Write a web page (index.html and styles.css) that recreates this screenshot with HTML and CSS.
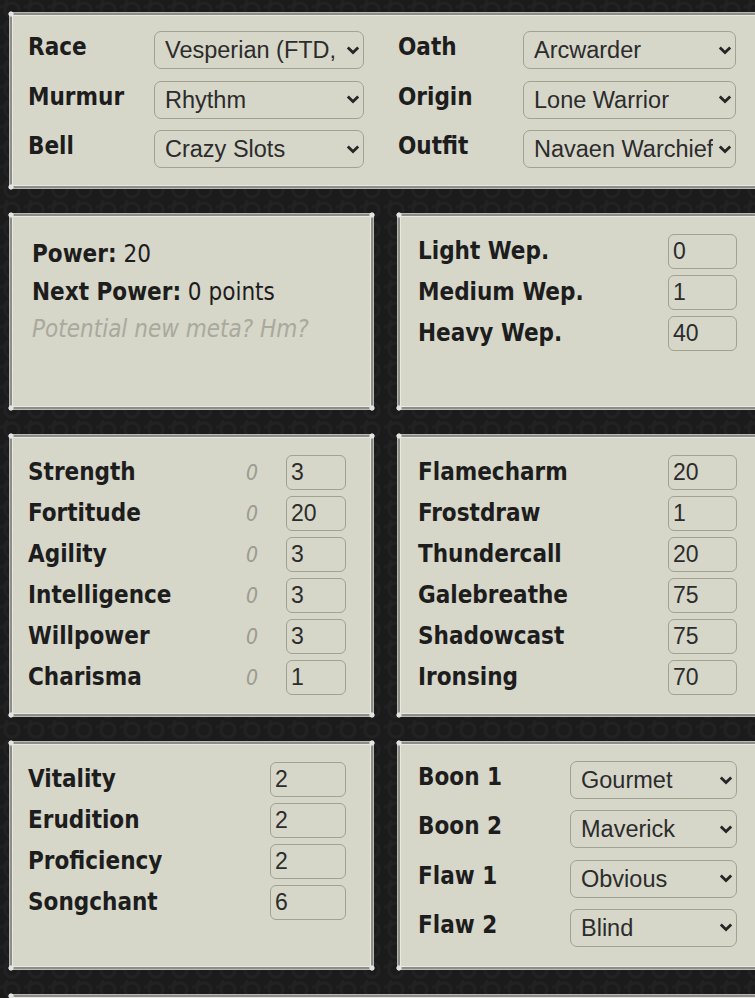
FILE: index.html
```html
<!DOCTYPE html>
<html lang="en">
<head>
<meta charset="utf-8">
<title>Character Sheet</title>
<link rel="stylesheet" href="styles.css">
</head>
<body>
<main class="sheet">
  <section class="panel panel-wide identity">
    <div class="pair-grid pair-left">
      <span class="lbl">Race</span>
      <span class="sel-wrap"><select class="sel"><option>Vesperian (FTD, Rare)</option></select><svg class="chev" viewBox="0 0 14 9" width="14" height="9"><path d="M1.8 1.6 L7 6.6 L12.2 1.6"/></svg></span>
      <span class="lbl">Murmur</span>
      <span class="sel-wrap"><select class="sel"><option>Rhythm</option></select><svg class="chev" viewBox="0 0 14 9" width="14" height="9"><path d="M1.8 1.6 L7 6.6 L12.2 1.6"/></svg></span>
      <span class="lbl">Bell</span>
      <span class="sel-wrap"><select class="sel"><option>Crazy Slots</option></select><svg class="chev" viewBox="0 0 14 9" width="14" height="9"><path d="M1.8 1.6 L7 6.6 L12.2 1.6"/></svg></span>
    </div>
    <div class="pair-grid pair-right">
      <span class="lbl">Oath</span>
      <span class="sel-wrap"><select class="sel"><option>Arcwarder</option></select><svg class="chev" viewBox="0 0 14 9" width="14" height="9"><path d="M1.8 1.6 L7 6.6 L12.2 1.6"/></svg></span>
      <span class="lbl">Origin</span>
      <span class="sel-wrap"><select class="sel"><option>Lone Warrior</option></select><svg class="chev" viewBox="0 0 14 9" width="14" height="9"><path d="M1.8 1.6 L7 6.6 L12.2 1.6"/></svg></span>
      <span class="lbl">Outfit</span>
      <span class="sel-wrap"><select class="sel"><option>Navaen Warchief</option></select><svg class="chev" viewBox="0 0 14 9" width="14" height="9"><path d="M1.8 1.6 L7 6.6 L12.2 1.6"/></svg></span>
    </div>
  </section>

  <section class="panel power">
    <p class="line"><b>Power:</b> 20</p>
    <p class="line"><b>Next Power:</b> 0 points</p>
    <p class="line hint">Potential new meta? Hm?</p>
  </section>

  <section class="panel right-panel">
    <div class="field-grid num-grid w69">
      <span class="lbl">Light Wep.</span><input class="num" value="0">
      <span class="lbl">Medium Wep.</span><input class="num" value="1">
      <span class="lbl">Heavy Wep.</span><input class="num" value="40">
    </div>
  </section>

  <section class="panel left-panel">
    <div class="field-grid stat-grid">
      <span class="lbl">Strength</span><span class="mod">0</span><input class="num" value="3">
      <span class="lbl">Fortitude</span><span class="mod">0</span><input class="num" value="20">
      <span class="lbl">Agility</span><span class="mod">0</span><input class="num" value="3">
      <span class="lbl">Intelligence</span><span class="mod">0</span><input class="num" value="3">
      <span class="lbl">Willpower</span><span class="mod">0</span><input class="num" value="3">
      <span class="lbl">Charisma</span><span class="mod">0</span><input class="num" value="1">
    </div>
  </section>

  <section class="panel right-panel">
    <div class="field-grid num-grid w69">
      <span class="lbl">Flamecharm</span><input class="num" value="20">
      <span class="lbl">Frostdraw</span><input class="num" value="1">
      <span class="lbl">Thundercall</span><input class="num" value="20">
      <span class="lbl">Galebreathe</span><input class="num" value="75">
      <span class="lbl">Shadowcast</span><input class="num" value="75">
      <span class="lbl">Ironsing</span><input class="num" value="70">
    </div>
  </section>

  <section class="panel left-panel">
    <div class="field-grid num-grid w76">
      <span class="lbl">Vitality</span><input class="num" value="2">
      <span class="lbl">Erudition</span><input class="num" value="2">
      <span class="lbl">Proficiency</span><input class="num" value="2">
      <span class="lbl">Songchant</span><input class="num" value="6">
    </div>
  </section>

  <section class="panel right-panel boons">
    <div class="field-grid sel-grid">
      <span class="lbl">Boon 1</span>
      <span class="sel-wrap"><select class="sel"><option>Gourmet</option></select><svg class="chev" viewBox="0 0 14 9" width="14" height="9"><path d="M1.8 1.6 L7 6.6 L12.2 1.6"/></svg></span>
      <span class="lbl">Boon 2</span>
      <span class="sel-wrap"><select class="sel"><option>Maverick</option></select><svg class="chev" viewBox="0 0 14 9" width="14" height="9"><path d="M1.8 1.6 L7 6.6 L12.2 1.6"/></svg></span>
      <span class="lbl">Flaw 1</span>
      <span class="sel-wrap"><select class="sel"><option>Obvious</option></select><svg class="chev" viewBox="0 0 14 9" width="14" height="9"><path d="M1.8 1.6 L7 6.6 L12.2 1.6"/></svg></span>
      <span class="lbl">Flaw 2</span>
      <span class="sel-wrap"><select class="sel"><option>Blind</option></select><svg class="chev" viewBox="0 0 14 9" width="14" height="9"><path d="M1.8 1.6 L7 6.6 L12.2 1.6"/></svg></span>
    </div>
  </section>

  <section class="panel panel-wide tail"></section>
</main>
</body>
</html>
```

FILE: styles.css
```css
html, body {
  margin: 0;
  padding: 0;
  overflow: hidden;
}

body {
  background-color: #1b1b1b;
  background-image:
    radial-gradient(circle at 50% 50%, transparent 0 5px, #222 6px 8px, transparent 9px),
    radial-gradient(circle at 0 0, transparent 0 5px, #212121 6px 8px, transparent 9px);
  background-size: 24px 20px, 24px 20px;
  font-family: "DejaVu Sans Condensed", "DejaVu Sans", sans-serif;
  font-stretch: condensed;
  font-size: 24px;
  color: #1d1d1d;
}

.sheet {
  display: grid;
  grid-template-columns: 365px 365px;
  grid-template-rows: 177px 197px 283px 229px 4px;
  column-gap: 23px;
  row-gap: 24px;
  padding: 12px 0 0 9px;
  width: 753px;
  height: 986px;
}

.panel {
  position: relative;
  box-sizing: border-box;
  background: #d6d6c9;
  border: 2px solid #8c8c88;
  box-shadow: inset 0 0 0 1px #e9e9e1, 0 0 0 1px #b9b9b4;
  margin: 1px;
}

.panel::before {
  content: "";
  position: absolute;
  inset: -5px;
  pointer-events: none;
  background:
    radial-gradient(circle at 4px 4px, #e4e4e4 0 2.2px, transparent 3px) left top / 9px 9px no-repeat,
    radial-gradient(circle at 5px 4px, #e4e4e4 0 2.2px, transparent 3px) right top / 9px 9px no-repeat,
    radial-gradient(circle at 4px 5px, #e4e4e4 0 2.2px, transparent 3px) left bottom / 9px 9px no-repeat,
    radial-gradient(circle at 5px 5px, #e4e4e4 0 2.2px, transparent 3px) right bottom / 9px 9px no-repeat;
}

.panel-wide {
  grid-column: 1 / span 2;
}

.tail {
  margin-bottom: 0;
  border-bottom: 0;
}

.lbl {
  font-weight: bold;
  line-height: normal;
  white-space: nowrap;
}

/* identity panel */
.identity {
  display: flex;
  align-items: flex-start;
  gap: 34px;
  padding: 16px 22px 0 16px;
}

.pair-grid {
  display: grid;
  row-gap: 11.5px;
  align-items: start;
  align-content: start;
}

.pair-left {
  grid-template-columns: 126px 210px;
}

.pair-right {
  grid-template-columns: 125px 213px;
}

.pair-grid .lbl,
.sel-grid .lbl {
  margin-top: 2px;
}

/* selects */
.sel-wrap {
  position: relative;
  display: block;
  height: 38px;
}

.sel {
  appearance: none;
  -webkit-appearance: none;
  box-sizing: border-box;
  display: block;
  width: 100%;
  height: 38px;
  margin: 0;
  padding: 0 22px 0 10px;
  border: 1px solid #a2a293;
  border-radius: 7px;
  background: transparent;
  font-family: "Liberation Sans", Arial, sans-serif;
  font-size: 23.5px;
  color: #2c2c2c;
}

.chev {
  position: absolute;
  right: 4px;
  top: 14.5px;
  fill: none;
  stroke: #262626;
  stroke-width: 2.8;
  stroke-linejoin: miter;
}

/* power */
.power {
  padding: 20px 20px 0 20px;
}

.line {
  margin: 0;
  line-height: 37.5px;
  white-space: nowrap;
}

.line b {
  font-weight: bold;
}

.hint {
  font-style: italic;
  color: #a9a99c;
}

/* field grids */
.left-panel {
  padding: 18px 25px 0 16px;
}

.right-panel {
  padding: 18px 22px 0 18px;
}

.boons {
  padding-top: 17px;
}

.field-grid {
  display: grid;
  row-gap: 6px;
  align-content: start;
}

.num-grid {
  align-items: baseline;
}

.w69 {
  grid-template-columns: 1fr 69px;
}

.w76 {
  grid-template-columns: 1fr 76px;
}

.stat-grid {
  grid-template-columns: 1fr auto 60px;
  column-gap: 28px;
  align-items: baseline;
}

.sel-grid {
  grid-template-columns: 1fr 167px;
  row-gap: 11.3px;
  align-items: start;
}

.mod {
  font-style: italic;
  font-size: 21px;
  color: #9b9b8f;
}

.num {
  box-sizing: border-box;
  width: 100%;
  height: 35px;
  margin: 0;
  padding: 0 4px;
  border: 1px solid #a2a293;
  border-radius: 6px;
  background: transparent;
  font-family: "Liberation Sans", Arial, sans-serif;
  font-size: 23px;
  color: #2c2c2c;
}
```
